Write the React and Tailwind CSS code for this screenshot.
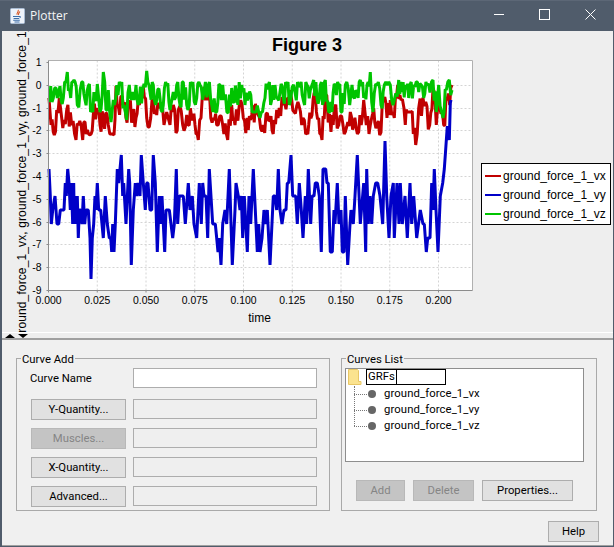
import React from "react";

const LV = { z: 141, a: 155, b: 169, c: 183, d: 196, e: 210, f: 224, g: 238, h: 252, i: 265, j: 279 };
const parseBlue = (s, x0) =>
  s.split(" ").map((t) => [x0 + parseInt(t, 10) / 3, LV[t[t.length - 1]]]);
const parsePx = (s, x0) =>
  s.split(" ").map((t) => {
    const [a, b] = t.split(",").map(Number);
    return [x0 + a / 3, b];
  });
const toPath = (pts) => pts.map((p, i) => `${i ? "L" : "M"}${p[0].toFixed(1)} ${p[1].toFixed(1)}`).join("");

// The samples in the picture lie close together and jump by whole steps:
// fill the traced extremes with the same fine jitter, kept inside the band.
function densify(pts, amp, seed, lo, hi) {
  let s = seed;
  const next = () => {
    s = (s * 1103515245 + 12345) & 0x7fffffff;
    return s / 0x7fffffff;
  };
  const out = [];
  for (let i = 0; i < pts.length - 1; i++) {
    const [x0, y0] = pts[i];
    const [x1, y1] = pts[i + 1];
    out.push(pts[i]);
    const n = Math.max(2, Math.ceil((x1 - x0) / 1.5));
    for (let k = 1; k < n; k++) {
      const t = k / n;
      const r = next();
      const j = r < 0.4 ? -amp : r < 0.6 ? 0 : amp;
      const y = y0 + (y1 - y0) * t + j;
      out.push([x0 + (x1 - x0) * t, Math.min(hi, Math.max(lo, y))]);
    }
  }
  out.push(pts[pts.length - 1]);
  return out;
}

const blue = [
  ...parseBlue("9b 13d 16f 20e 27d 33f 38f 43e 54e 58c 61d 65b 69c 73e 76c 80f 83c 85f 88d 91f 94d 97g 100e 104e 108f 112d 116f 120e 127e 132g 135j 139g 143f 147d 150e 154c 158e 164e 172g 178d 184f 190g 194g 197h 200f 204h 208f 214b 218c 226a 230d 233c 240f 248b 251c 256i 262e 268c 272d 276c 282d 286a 292c 298e 302c 306c 312e 317e 322a 328c 334h 340d 344f 348d 352f 356h 360e 370e 375f 380g 385f 391b 395f 400d 412d", 46),
  ...parseBlue("16f 25c 30e 37d 42f 50g 58c 64f 68c 72d 78d 83g 88b 98f 106f 110g 114h 118g 123i 128f 135e 140f 148b 157i 165e 168c 175d 180e 184d 188g 193d 202h 207d 212f 220b 226e 232h 236f 240h 246g 252e 258f 262e 270i 280d 285d 290e 295b 300e 306f 312e 318e 322c 326c 333a 338d 347d 352f 358c 364e 369g 376d 380f 385b 392f 396d 402d 406c 412c", 180),
  ...parseBlue("13d 19h 24b 32b 36c 40c 46h 52h 57e 60f 67c 72f 78e 82h 87h 91d 98i 105f 108e 115f 120d 127a 136f 146c 152h 155b 160f 165d 170f 175d 182c 188c 195d 203f 210z 215d 222g 228d 235c 238g 246c 252f 256c 262f 270d 277g 285c 290f 296d 305g 316e 324f 328f 334h 338g 345g 350c 354e 358b 363e 369h 376d 383c 388b 391a", 315),
  [447.3, 126], [449.3, 140], [450.3, 103], [451, 100],
];

const red = densify([
  ...parsePx("147,98 153,125 163,135 170,110 178,98 185,118 192,120 200,110 215,125 228,140 235,125 248,140 255,122 262,130 270,135 280,115 290,108 300,125 310,118 325,125 342,135 348,86 355,106 370,105 378,118 388,105 398,118 408,118 418,105 430,87 440,118 452,118 460,100 470,115 480,105 492,125 500,112 510,125 520,105 528,133 535,110 548,125 560,115 575,118 585,125 595,140 603,118 612,87 625,100 640,118 650,125 668,125 683,140 695,105 705,125 718,105 730,118 745,130 755,115 770,112 790,125 810,120 816,130 830,110 850,105 862,98 875,100 890,106 905,125 921,133", 0),
  ...parsePx("5,125 15,115 25,95 35,118 45,140 55,95 72,132 82,108 95,125 108,125 115,132 130,112 140,125 155,132 170,100 178,125 190,125 200,108 210,125 218,135 230,100 240,118 250,100 262,118 272,85 282,100 295,125 300,112 312,112 326,145 335,108 352,106 368,125 378,88 388,125 398,108 410,125 420,100 428,105 435,85", 307),
], 9, 7, 88, 134);

const green = densify([
  ...parsePx("147,98 152,86 160,98 172,98 180,86 190,98 202,72 212,98 222,80 232,105 245,82 255,100 265,86 275,110 285,98 292,84 300,112 310,72 318,110 325,90 333,122 340,100 350,85 362,85 372,105 380,120 388,85 398,92 408,85 418,100 428,90 440,71 450,92 460,85 470,100 480,98 490,105 500,85 510,110 520,92 530,85 540,105 550,82 560,105 575,85 590,98 600,85 612,92 625,85 635,105 650,112 660,85 672,100 685,113 695,88 710,98 725,85 735,105 745,98 760,112 780,118 795,98 805,85 815,100 825,85 840,92 850,98 860,85 872,100 885,92 900,85 910,100 921,85", 0),
  ...parsePx("10,90 20,80 30,98 40,85 50,100 55,80 65,112 75,112 85,85 95,85 105,112 115,85 128,105 135,85 150,92 160,80 170,98 180,85 190,72 198,112 210,85 222,105 232,85 250,85 262,100 275,80 285,92 295,85 305,98 320,85 335,92 350,98 360,85 378,80 388,112 395,85 408,118 418,90 427,80 435,90", 307),
], 10, 23, 82, 112);

const LEFT = 48.5, RIGHT = 472.5, TOP = 60.5, BOTTOM = 290.5;
const xTicks = ["0.000", "0.025", "0.050", "0.075", "0.100", "0.125", "0.150", "0.175", "0.200"].map((l, i) => [l, 48.5 + i * 48.75]);
const yTicks = [1, 0, -1, -2, -3, -4, -5, -6, -7, -8, -9].map((v, i) => [v, Math.round(62 + i * 22.8) + 0.5]);
const CHART_FONT = "'Liberation Sans', Arial, sans-serif";

function Chart() {
  return (
    <svg width="478" height="301" viewBox="2 31 478 301" className="block shrink-0" fontFamily={CHART_FONT}>
      <text x="307" y="51" textAnchor="middle" fontSize="18" fontWeight="700" fill="#000">Figure 3</text>
      <text transform="translate(25.5 339.5) rotate(-90)" fontSize="12" letterSpacing="0.12" fill="#000">
        ground_force_1_vx, ground_force_1_vy, ground_force_1_vz
      </text>
      <rect x={LEFT} y={TOP} width={RIGHT - LEFT} height={BOTTOM - TOP} fill="#fff" />
      {xTicks.slice(1).map(([l, x]) => (
        <line key={l} x1={x} x2={x} y1={TOP} y2={BOTTOM} stroke="#d4d4d4" strokeDasharray="2 2" />
      ))}
      {yTicks.slice(1, -1).map(([v, y]) => (
        <line key={v} x1={LEFT} x2={RIGHT} y1={y} y2={y} stroke="#d4d4d4" strokeDasharray="2 2" />
      ))}
      <path d={toPath(red)} fill="none" stroke="#c00000" strokeWidth="3" strokeLinejoin="bevel" />
      <path d={toPath(blue)} fill="none" stroke="#0000c8" strokeWidth="3" strokeLinejoin="bevel" />
      <path d={toPath(green)} fill="none" stroke="#00c400" strokeWidth="3" strokeLinejoin="bevel" />
      <path d={`M${LEFT} ${TOP}H${RIGHT}V${BOTTOM}`} fill="none" stroke="#b0b0b0" />
      <path d={`M${LEFT} ${TOP}V${BOTTOM}H${RIGHT}`} fill="none" stroke="#8c8c8c" />
      {yTicks.map(([v, y]) => (
        <g key={v}>
          <line x1={LEFT - 2} x2={LEFT} y1={y} y2={y} stroke="#8c8c8c" />
          <text x={LEFT - 7} y={y + 3.5} textAnchor="end" fontSize="10.4" fill="#000">{v}</text>
        </g>
      ))}
      {xTicks.map(([l, x]) => (
        <g key={l}>
          <line x1={x} x2={x} y1={BOTTOM} y2={BOTTOM + 2} stroke="#8c8c8c" />
          <text x={x} y={304} textAnchor="middle" fontSize="10.4" fill="#000">{l}</text>
        </g>
      ))}
      <text x="259.5" y="322" textAnchor="middle" fontSize="12" fill="#000">time</text>
    </svg>
  );
}

function LegendRow({ color, label }) {
  return (
    <div className="flex h-[19px] items-center gap-[2px] pl-[3px]">
      <span className="h-[2px] w-[16px]" style={{ backgroundColor: color }} />
      <span className="text-[12px] text-black [font-family:'Liberation_Sans',Arial,sans-serif]">{label}</span>
    </div>
  );
}

function Btn({ children, disabled, className = "" }) {
  return (
    <button
      className={
        "h-[21px] border text-[11.3px] leading-none " +
        (disabled ? "border-[#b8b8b8] bg-[#c4c4c4] text-[#858585] " : "border-[#adadad] bg-[#e1e1e1] text-black ") +
        className
      }
    >
      {children}
    </button>
  );
}

function Row({ label, disabled }) {
  return (
    <div className="flex items-start gap-[7px]">
      <Btn disabled={disabled} className="w-[95px]">{label}</Btn>
      <div className="h-[20px] w-[184px] border border-[#adadad] bg-[#efefef]" />
    </div>
  );
}

function Group({ title, className = "", children }) {
  return (
    <div className={"relative h-[153px] border border-[#a9a9a9] " + className}>
      <span className="absolute -top-[6px] left-[4px] bg-[#f0f0f0] px-[1px] text-[11.3px] leading-[14px] text-black">{title}</span>
      {children}
    </div>
  );
}

function TreeItem({ label }) {
  return (
    <div className="flex h-[16px] items-center">
      <span className="w-[13px] border-t border-dotted border-[#777]" />
      <span className="ml-[1px] h-[8px] w-[8px] rounded-full bg-[#666]" />
      <span className="ml-[8px] text-[11.3px] leading-none tracking-[0.1px] text-black">{label}</span>
    </div>
  );
}

export default function App() {
  return (
    <div className="flex h-[547px] w-[614px] flex-col overflow-hidden bg-[#505c6b] [font-family:Roboto,Tahoma,sans-serif]">
      <div className="flex h-[31px] shrink-0 items-center border-t border-[#5c6776] pl-[10px]">
        <svg width="15" height="16" viewBox="0 0 15 16" className="shrink-0">
          <rect x="0.5" y="0.5" width="14" height="15" rx="1" fill="#eef3fa" stroke="#a9bbd2" />
          <path d="M8 2c1.5 1.5-2 3-.8 4.8M9.8 3.500C9 5 8 5.500 8.600 7" fill="none" stroke="#d9541e" strokeWidth="1.1" />
          <path d="M3 8.500h7c.5 0 .5 1-.3 1.300M3.600 10.500h5.600M3.200 12.200h6.600M4.500 14h5" fill="none" stroke="#3f6fa8" strokeWidth="1.1" />
        </svg>
        <span className="ml-[5px] text-[12px] text-[#f4f5f6] [font-family:'Open_Sans',sans-serif]">Plotter</span>
        <div className="ml-auto flex">
          <svg width="46" height="20" viewBox="0 0 46 20" className="block"><path d="M18 8.500h10" stroke="#fff" /></svg>
          <svg width="46" height="20" viewBox="0 0 46 20" className="block"><rect x="17.500" y="3.500" width="10" height="10" fill="none" stroke="#fff" /></svg>
          <svg width="46" height="20" viewBox="0 0 46 20" className="block"><path d="M17.500 3.500l10 10M27.500 3.500l-10 10" stroke="#fff" /></svg>
        </div>
      </div>

      <div className="ml-[2px] mr-[1px] flex flex-1 flex-col bg-[#eeeeee]">
        <div className="flex h-[301px] shrink-0">
          <Chart />
          <div className="ml-[1px] mt-[132px] h-[62px] w-[130px] self-start border border-black bg-white py-[2px]">
            <LegendRow color="#c00000" label="ground_force_1_vx" />
            <LegendRow color="#0000c8" label="ground_force_1_vy" />
            <LegendRow color="#00c400" label="ground_force_1_vz" />
          </div>
        </div>

        <div className="flex h-[6px] shrink-0 items-end gap-[3px] border-t border-white pl-[3px]">
          <span className="h-0 w-0 border-x-[5px] border-b-[4px] border-x-transparent border-b-black" />
          <span className="h-0 w-0 border-x-[5px] border-t-[4px] border-x-transparent border-t-black" />
        </div>

        <div className="flex flex-1 flex-col border-t-2 border-b border-[#a0a0a0] bg-[#f0f0f0] pl-[14px] pr-[14px] pt-[18px]">
          <div className="flex gap-[11px]">
            <Group title="Curve Add" className="w-[314px]">
              <div className="flex flex-col gap-[8px] pl-[14px] pt-[9px]">
                <div className="mb-[3px] flex items-center gap-[7px]">
                  <span className="-ml-[1px] w-[96px] pt-[2px] text-[11.3px] leading-none text-black">Curve Name</span>
                  <div className="h-[20px] w-[184px] border border-[#adadad] bg-white" />
                </div>
                <Row label="Y-Quantity..." />
                <Row label="Muscles..." disabled />
                <Row label="X-Quantity..." />
                <Row label="Advanced..." />
              </div>
            </Group>
            <Group title="Curves List" className="w-[256px]">
              <div className="mx-[3px] mt-[9px] h-[94px] w-[239px] border border-[#8e8e8e] bg-white pl-[2px]">
                <div className="flex h-[16px] items-center">
                  <svg width="14" height="16" viewBox="0 0 14 16" className="shrink-0">
                    <path d="M0.500 0.500h9l1 1v11h2.500v3h-12.500z" fill="#fbe38f" stroke="#e8c766" />
                  </svg>
                  <div className="ml-[4px] flex h-[16px] w-[80px] items-center border border-black bg-white pl-[1px]">
                    <span className="border-r border-black pr-[1px] text-[11.3px] leading-[14px] text-black">GRFs</span>
                  </div>
                </div>
                <div className="relative ml-[6px] mt-[1px]">
                  <span className="absolute left-0 top-0 h-[40px] border-l border-dotted border-[#777]" />
                  <TreeItem label="ground_force_1_vx" />
                  <TreeItem label="ground_force_1_vy" />
                  <TreeItem label="ground_force_1_vz" />
                </div>
              </div>
              <div className="ml-[14px] mt-[18px] flex gap-[8px]">
                <Btn disabled className="w-[49px]">Add</Btn>
                <Btn disabled className="w-[61px]">Delete</Btn>
                <Btn className="w-[91px]">Properties...</Btn>
              </div>
            </Group>
          </div>
          <div className="mt-[10px] flex justify-end">
            <Btn className="w-[51px]">Help</Btn>
          </div>
        </div>
      </div>
      <div className="h-[1px] shrink-0" />
    </div>
  );
}
